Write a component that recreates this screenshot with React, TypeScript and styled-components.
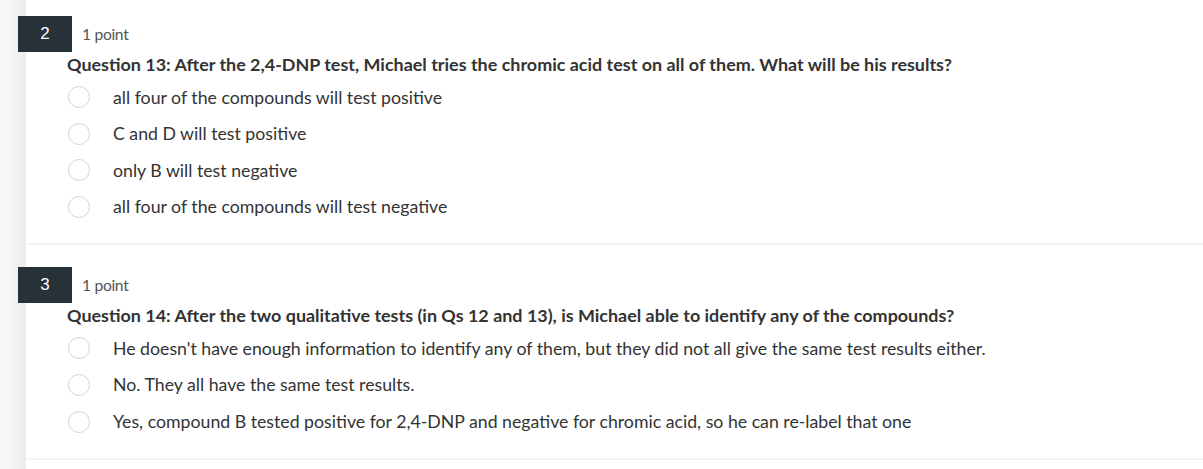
import React from "react";
import styled, { createGlobalStyle } from "styled-components";

const GlobalStyle = createGlobalStyle`
  html, body {
    margin: 0;
    padding: 0;
    background: #ffffff;
  }
  body {
    font-family: Lato, "Open Sans", "Liberation Sans", sans-serif;
    color: #333333;
  }
`;

const Page = styled.div`
  display: flex;
  width: 1203px;
  height: 469px;
  overflow: hidden;
  background: linear-gradient(90deg, #f7f7f7 0px, #f4f4f4 12px, #ebebeb 26px);
`;

const Gutter = styled.div`
  width: 26px;
  flex-shrink: 0;
`;

const List = styled.div`
  flex: 1;
  display: flex;
  flex-direction: column;
  background: #ffffff;
`;

const Card = styled.section<{ $top: number }>`
  display: flex;
  flex-direction: column;
  padding: ${(p) => p.$top}px 0 18px 0;
  border-bottom: 2px solid #f4f4f4;
  background: #ffffff;
`;

const Header = styled.div`
  display: flex;
  align-items: center;
  height: 36px;
  margin-left: -8px;
`;

const Badge = styled.div`
  width: 54px;
  height: 36px;
  display: flex;
  align-items: center;
  justify-content: center;
  background: #263238;
  color: #ffffff;
  font-family: "Liberation Sans", Arial, sans-serif;
  font-size: 17px;
`;

const Points = styled.span`
  margin-left: 10px;
  font-size: 15.6px;
  color: #555555;
  letter-spacing: -0.3px;
`;

const Prompt = styled.h3`
  margin: 2px 0 0 41px;
  height: 20px;
  line-height: 20px;
  font-size: 17.96px;
  font-weight: 700;
  color: #333333;
  white-space: nowrap;
`;

const Options = styled.div`
  display: flex;
  flex-direction: column;
  margin-top: 4.7px;
`;

const Option = styled.label`
  display: flex;
  align-items: center;
  height: 36.67px;
  padding-left: 42px;
  cursor: pointer;
`;

const Radio = styled.span`
  width: 22px;
  height: 22px;
  border-radius: 50%;
  border: 1px solid #d4d4d4;
  box-sizing: border-box;
  flex-shrink: 0;
  background: #ffffff;
`;

const OptionText = styled.span`
  margin-left: 23px;
  font-size: 17.72px;
  color: #333333;
  white-space: nowrap;
`;

type Question = {
  num: number;
  points: string;
  prompt: string;
  options: string[];
};

const questions: Question[] = [
  {
    num: 2,
    points: "1 point",
    prompt:
      "Question 13: After the 2,4-DNP test, Michael tries the chromic acid test on all of them. What will be his results?",
    options: [
      "all four of the compounds will test positive",
      "C and D will test positive",
      "only B will test negative",
      "all four of the compounds will test negative",
    ],
  },
  {
    num: 3,
    points: "1 point",
    prompt:
      "Question 14: After the two qualitative tests (in Qs 12 and 13), is Michael able to identify any of the compounds?",
    options: [
      "He doesn't have enough information to identify any of them, but they did not all give the same test results either.",
      "No. They all have the same test results.",
      "Yes, compound B tested positive for 2,4-DNP and negative for chromic acid, so he can re-label that one",
    ],
  },
];

const App = () => {
  return (
    <>
      <GlobalStyle />
      <Page>
        <Gutter />
        <List>
          {questions.map((q, i) => (
            <Card key={q.num} $top={i === 0 ? 16 : 22}>
              <Header>
                <Badge>{q.num}</Badge>
                <Points>{q.points}</Points>
              </Header>
              <Prompt>{q.prompt}</Prompt>
              <Options>
                {q.options.map((o) => (
                  <Option key={o}>
                    <Radio />
                    <OptionText>{o}</OptionText>
                  </Option>
                ))}
              </Options>
            </Card>
          ))}
        </List>
      </Page>
    </>
  );
};

export default App;
